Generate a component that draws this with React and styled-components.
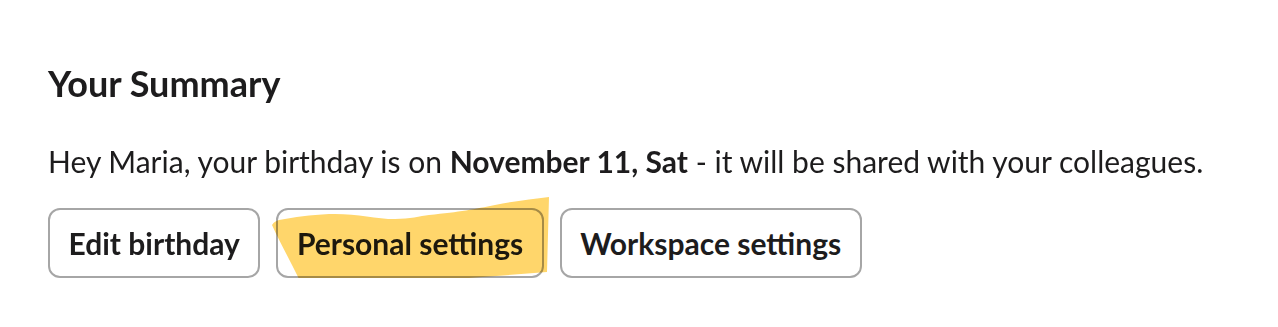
import styled, { createGlobalStyle } from 'styled-components';

const GlobalStyle = createGlobalStyle`
  body {
    margin: 0;
    background: #fff;
    font-family: Lato, "Noto Sans", sans-serif;
    color: #1d1c1d;
  }
`;

const buttons = ['Edit birthday', 'Personal settings', 'Workspace settings'];

export default function App() {
  return (
    <Page>
      <GlobalStyle />
      <Title>Your Summary</Title>
      <Text>
        Hey Maria, your birthday is on <b>November 11, Sat</b> - it will be
        shared with your colleagues.
      </Text>
      <Actions>
        {buttons.map((label) => (
          <Button key={label}>
            {label}
            {label === 'Personal settings' && (
              <Marker viewBox='0 0 280 98' preserveAspectRatio='none'>
                <path
                  d='M2 28 C 4 25, 6 24, 9 23 C 25 20, 40 18, 59 17 C 85 16, 105 22, 125 22 C 140 22, 150 19, 159 18 C 190 15, 205 12, 225 8 C 245 4, 262 2, 279 0 L 277 75 C 230 79, 180 82, 125 87 C 95 90, 65 92, 35 95 C 25 72, 12 50, 2 28 Z'
                  fill='#ffd66b'
                />
              </Marker>
            )}
          </Button>
        ))}
      </Actions>
    </Page>
  );
}

// -------------------------------------------------- styling ----------------------------------------------
const Page = styled.div`
  padding: 61px 48px 0;
`;

const Title = styled.h2`
  margin: 0;
  font-size: 36px;
  font-weight: 700;
  line-height: 44px;
`;

const Text = styled.p`
  margin: 38px 0 0;
  font-size: 30px;
  line-height: 36px;

  b {
    font-weight: 700;
  }
`;

const Actions = styled.div`
  display: flex;
  gap: 16px;
  margin-top: 29px;
`;

const Button = styled.button`
  position: relative;
  height: 70px;
  padding: 0 18.5px;
  border: 2px solid #a6a6a6;
  border-radius: 12px;
  background: #fff;
  font-family: inherit;
  font-size: 30px;
  line-height: 36px;
  font-weight: 700;
  color: #1d1c1d;
  cursor: pointer;
`;

// highlighter stroke laid over the button
const Marker = styled.svg`
  position: absolute;
  left: -8px;
  top: -13px;
  width: 280px;
  height: 98px;
  mix-blend-mode: multiply;
  pointer-events: none;
`;
